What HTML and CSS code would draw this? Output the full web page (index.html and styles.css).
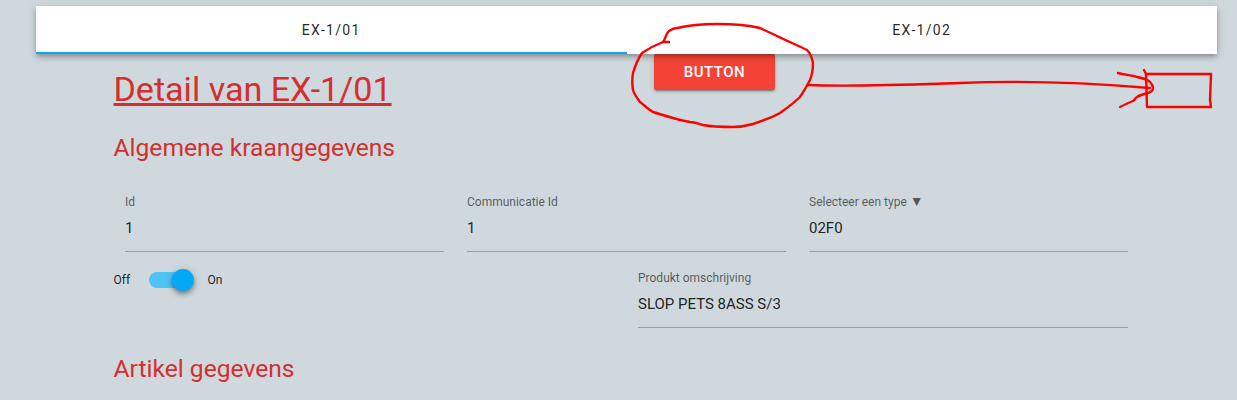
FILE: index.html
```html
<!DOCTYPE html>
<html lang="nl">
<head>
<meta charset="utf-8">
<title>Detail van EX-1/01</title>
<link rel="stylesheet" href="styles.css">
</head>
<body>
<nav class="tabs">
  <div class="tab tab-active">EX-1/01</div>
  <div class="tab">EX-1/02</div>
</nav>
<main class="content">
  <div class="title-row">
    <h1 class="title">Detail van EX-1/01</h1>
    <button class="btn">BUTTON</button>
  </div>
  <h2 class="section section-first">Algemene kraangegevens</h2>
  <div class="fields">
    <div class="field"><label class="field-label">Id</label><div class="field-value">1</div></div>
    <div class="field"><label class="field-label">Communicatie Id</label><div class="field-value">1</div></div>
    <div class="field"><label class="field-label">Selecteer een type <span class="caret">▼</span></label><div class="field-value">02F0</div></div>
  </div>
  <div class="row-two">
    <div class="switch-row">
      <span class="switch-text">Off</span>
      <span class="switch"><span class="switch-track"></span><span class="switch-thumb"></span></span>
      <span class="switch-text">On</span>
    </div>
    <div class="field field-wide"><label class="field-label">Produkt omschrijving</label><div class="field-value">SLOP PETS 8ASS S/3</div></div>
  </div>
  <h2 class="section section-second">Artikel gegevens</h2>
</main>
<svg class="scribble" width="1237" height="400" viewBox="0 0 1237 400" fill="none" stroke="#f00" stroke-width="2.4" stroke-linecap="round" stroke-linejoin="round">
  <path d="M669 42C666 42 664 42 663 42C666 38 666 33 669 31C672 29 674 28 677 28C690 25 703 24 717 24C732 24 748 25 760 28C766 31 771 33 777 36C787 41 797 45 807 50C811 54 812 58 813 63C813 70 812 75 810 80C807 86 804 91 800 97C794 103 787 108 780 113C771 118 762 121 753 124C746 126 740 127 733 127C723 127 713 127 703 125C699 124 694 122 690 122C684 121 679 120 673 118C666 116 659 114 653 112C648 109 644 105 640 102C637 98 634 94 633 90C632 84 632 79 633 73C635 66 638 59 642 53C648 49 655 45 663 42"/>
  <path d="M808 85C850 87 900 85 960 83C1030 80 1090 83 1150 88"/>
  <path d="M1118 73C1125 75 1131 75 1137 77C1142 78 1147 79 1150 82C1152 84 1153 86 1153 88C1153 90 1151 92 1148 93C1144 94 1140 95 1137 97C1135 98 1135 100 1133 101C1128 103 1124 105 1120 107"/>
  <path d="M1144 70L1146 74L1147 107L1211 107L1210 100L1211 74L1146 74"/>
</svg>
</body>
</html>
```
FILE: styles.css
```css
* { box-sizing: border-box; }
html, body { margin: 0; height: 400px; overflow: hidden; }
body {
  background: #cfd8dc;
  font-family: Roboto, "Liberation Sans", sans-serif;
  color: #000;
  position: relative;
  padding-top: 6px;
}
.tabs {
  display: flex;
  margin: 0 20px 0 36px;
  height: 48px;
  background: #fff;
  box-shadow: 0 2px 4px -1px rgba(0,0,0,.2), 0 4px 5px 0 rgba(0,0,0,.14), 0 1px 10px 0 rgba(0,0,0,.12);
  position: relative;
  z-index: 1;
}
.tab {
  flex: 1;
  display: flex;
  align-items: center;
  justify-content: center;
  font-size: 14px;
  letter-spacing: 1.3px;
  color: rgba(0,0,0,.87);
}
.tab-active { border-bottom: 2px solid #03a9f4; padding-top: 2px; }
.content { padding: 0 109px 0 113.5px; }
.title-row { display: flex; align-items: flex-start; height: 64px; }
.title {
  margin: 13px 0 0;
  width: 540.5px;
  font-size: 34.1px;
  line-height: 44px;
  font-weight: 400;
  color: #d32f2f;
  text-decoration: underline;
  white-space: nowrap;
}
.btn {
  width: 121px;
  height: 36px;
  border: 0;
  border-radius: 2px;
  background: #f44336;
  color: #fff;
  font: 500 15px Roboto, "Liberation Sans", sans-serif;
  letter-spacing: .5px;
  box-shadow: 0 3px 1px -2px rgba(0,0,0,.2), 0 2px 2px 0 rgba(0,0,0,.14), 0 1px 5px 0 rgba(0,0,0,.12);
  position: relative;
}
.section {
  margin: 0;
  font-size: 24.6px;
  line-height: 32px;
  font-weight: 400;
  color: #d32f2f;
}
.section-first { margin-top: 14px; }
.section-second { margin-top: 25px; }
.fields {
  display: grid;
  grid-template-columns: 319px 319px 319px;
  column-gap: 23px;
  margin: 30px 0 0 11.5px;
}
.field { border-bottom: 1px solid #9e9e9e; height: 58px; }
.field-label { display: block; font-size: 12px; line-height: 16px; color: rgba(0,0,0,.6); }
.caret { font-size: 14px; line-height: 14px; }
.field-value { margin-top: 8px; font-size: 15px; line-height: 20px; color: rgba(0,0,0,.87); }
.row-two { display: flex; margin-top: 18px; height: 58px; }
.switch-row { width: 524.5px; display: flex; align-items: center; height: 20px; }
.switch-text { font-size: 12px; line-height: 20px; color: rgba(0,0,0,.87); }
.switch { width: 48px; height: 24px; margin: 0 11px 0 18.5px; position: relative; flex: none; }
.switch-track {
  position: absolute; left: 0; top: 4px; width: 34px; height: 16px;
  border-radius: 8px; background: #4fc3f7;
}
.switch-thumb {
  position: absolute; left: 23px; top: 1px; width: 22px; height: 22px;
  border-radius: 50%; background: #03a9f4;
  box-shadow: 0 2px 4px -1px rgba(0,0,0,.3), 0 4px 5px 0 rgba(0,0,0,.2), 0 1px 10px 0 rgba(0,0,0,.16);
}
.field-wide { width: 490px; }
.scribble { position: absolute; left: 0; top: 0; z-index: 2; pointer-events: none; }
```
